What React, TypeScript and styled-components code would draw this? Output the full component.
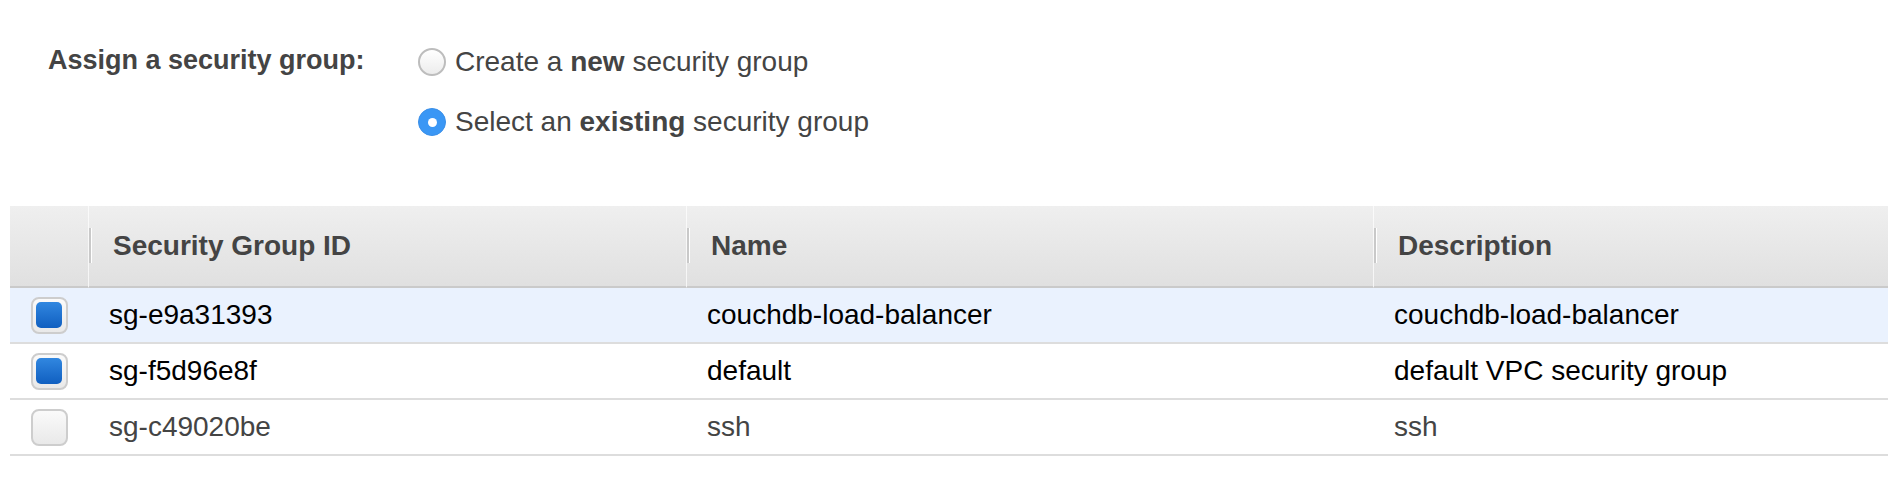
import React from "react";
import styled, { createGlobalStyle } from "styled-components";

const Global = createGlobalStyle`
  html, body { margin: 0; padding: 0; background: #ffffff; }
  body { font-family: "Liberation Sans", Arial, Helvetica, sans-serif; }
`;

const Page = styled.div`
  width: 1888px;
  height: 494px;
  overflow: hidden;
  background: #fff;
`;

const AssignSection = styled.div`
  display: flex;
  align-items: flex-start;
  padding: 32px 0 0 48px;
  height: 206px;
  box-sizing: border-box;
`;

const AssignLabel = styled.div`
  width: 370px;
  height: 60px;
  line-height: 56px;
  font-size: 27px;
  font-weight: 700;
  color: #444;
`;

const Options = styled.div`
  display: flex;
  flex-direction: column;
`;

const OptionRow = styled.label`
  display: flex;
  align-items: center;
  gap: 9px;
  height: 60px;
  font-size: 28px;
  color: #444;
  b { font-weight: 700; }
`;

const Radio = styled.span<{ $checked?: boolean }>`
  width: 28px;
  height: 28px;
  border-radius: 50%;
  box-sizing: border-box;
  display: flex;
  align-items: center;
  justify-content: center;
  background: ${(p) =>
    p.$checked ? "#3a97f5" : "linear-gradient(#ffffff, #ececec)"};
  border: ${(p) => (p.$checked ? "1px solid #3a8fe8" : "2px solid #bdbdbd")};
  &::after {
    content: "";
    display: ${(p) => (p.$checked ? "block" : "none")};
    width: 9px;
    height: 9px;
    border-radius: 50%;
    background: #fff;
  }
`;

const Table = styled.div`
  margin-left: 10px;
  display: grid;
  grid-template-columns: 78px 598px 687px 1fr;
`;

const HeaderCell = styled.div<{ $divider?: boolean }>`
  position: relative;
  height: 80px;
  display: flex;
  align-items: center;
  padding-left: 24px;
  font-size: 28px;
  font-weight: 700;
  color: #444;
  background: linear-gradient(#efefef, #e0e0e0);
  border-bottom: 2px solid #cacaca;
  border-left: ${(p) => (p.$divider ? "1px solid rgba(255,255,255,0.7)" : "none")};
  &::before {
    content: "";
    display: ${(p) => (p.$divider ? "block" : "none")};
    position: absolute;
    left: 0;
    top: 22px;
    height: 35px;
    width: 2px;
    background: #c9c9c9;
    box-shadow: 1px 0 0 #ffffff;
  }
`;

const BodyCell = styled.div<{ $selected?: boolean; $muted?: boolean; $center?: boolean }>`
  height: 54px;
  display: flex;
  align-items: center;
  justify-content: ${(p) => (p.$center ? "center" : "flex-start")};
  padding-left: ${(p) => (p.$center ? "0" : "21px")};
  font-size: 28px;
  color: ${(p) => (p.$muted ? "#444" : "#000")};
  background: ${(p) => (p.$selected ? "#eaf2fe" : "#ffffff")};
  border-bottom: 2px solid #dddddd;
`;

const Checkbox = styled.span<{ $checked?: boolean }>`
  width: 37px;
  height: 37px;
  box-sizing: border-box;
  border-radius: 8px;
  border: 2px solid #cdcdcd;
  background: linear-gradient(#fafafa, #e9e9e9);
  display: flex;
  align-items: center;
  justify-content: center;
  &::after {
    content: "";
    display: ${(p) => (p.$checked ? "block" : "none")};
    width: 26px;
    height: 26px;
    border-radius: 5px;
    background: linear-gradient(#3187e0, #105fc0);
  }
`;

type Group = { id: string; name: string; desc: string; checked: boolean; selected: boolean };

const groups: Group[] = [
  { id: "sg-e9a31393", name: "couchdb-load-balancer", desc: "couchdb-load-balancer", checked: true, selected: true },
  { id: "sg-f5d96e8f", name: "default", desc: "default VPC security group", checked: true, selected: false },
  { id: "sg-c49020be", name: "ssh", desc: "ssh", checked: false, selected: false },
];

export default function App() {
  return (
    <Page>
      <Global />
      <AssignSection>
        <AssignLabel>Assign a security group:</AssignLabel>
        <Options>
          <OptionRow>
            <Radio />
            <span>
              Create a <b>new</b> security group
            </span>
          </OptionRow>
          <OptionRow>
            <Radio $checked />
            <span>
              Select an <b>existing</b> security group
            </span>
          </OptionRow>
        </Options>
      </AssignSection>
      <Table>
        <HeaderCell />
        <HeaderCell $divider>Security Group ID</HeaderCell>
        <HeaderCell $divider>Name</HeaderCell>
        <HeaderCell $divider>Description</HeaderCell>
        {groups.map((g) => (
          <React.Fragment key={g.id}>
            <BodyCell $selected={g.selected} $center>
              <Checkbox $checked={g.checked} />
            </BodyCell>
            <BodyCell $selected={g.selected} $muted={!g.checked}>{g.id}</BodyCell>
            <BodyCell $selected={g.selected} $muted={!g.checked}>{g.name}</BodyCell>
            <BodyCell $selected={g.selected} $muted={!g.checked}>{g.desc}</BodyCell>
          </React.Fragment>
        ))}
      </Table>
    </Page>
  );
}
